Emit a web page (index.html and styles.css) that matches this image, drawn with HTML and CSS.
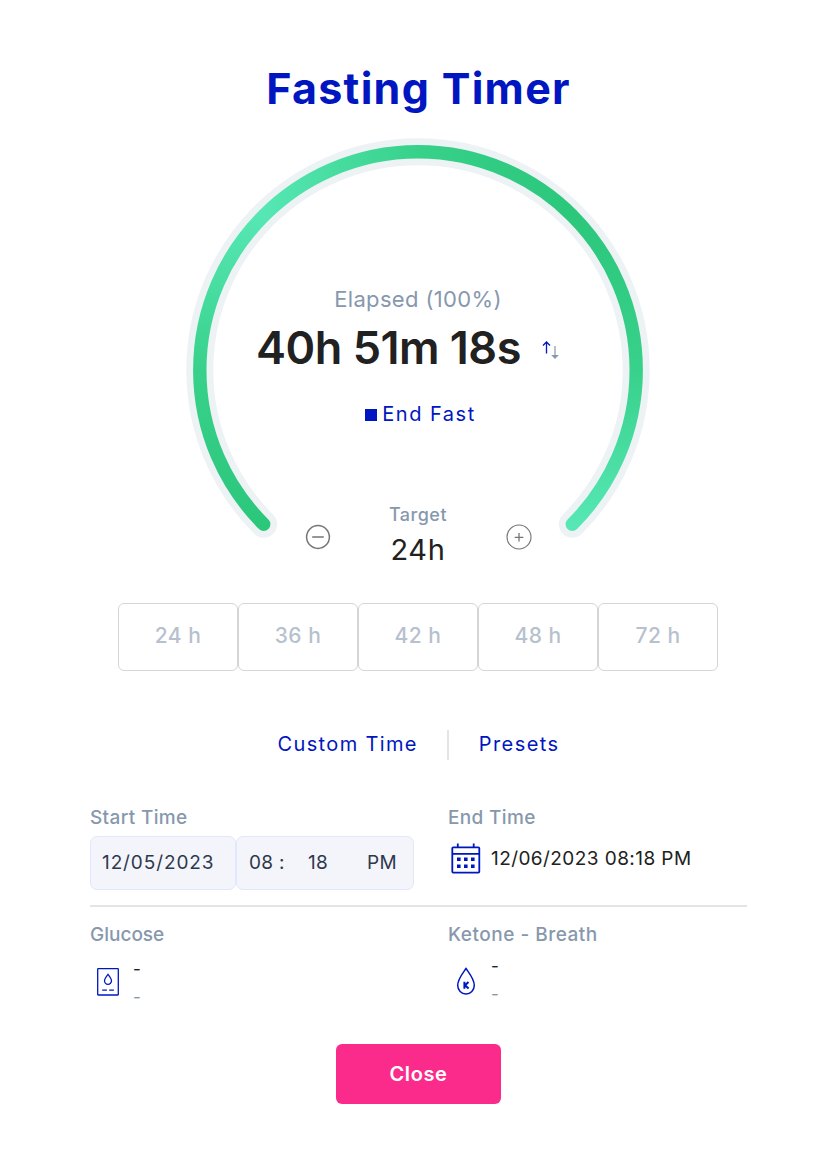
FILE: index.html
```html
<html>
<head>
    <meta charset="utf-8"/>
    <title>Fasting Timer</title>
    <link rel="stylesheet" href="styles.css">
</head>

<body>
<h1 class="title"><span>Fasting Timer</span></h1>

<div class="dial">
    <svg class="ring" viewBox="0 0 464 400">
        <defs>
            <linearGradient id="left" gradientUnits="userSpaceOnUse" x1="0" y1="386" x2="0" y2="78">
                <stop offset="0" stop-color="#2bc77b"/>
                <stop offset="0.5" stop-color="#38d18b"/>
                <stop offset="1" stop-color="#56e7b4"/>
            </linearGradient>
            <linearGradient id="over" gradientUnits="userSpaceOnUse" x1="78" y1="0" x2="386" y2="0">
                <stop offset="0" stop-color="#56e7b4"/>
                <stop offset="0.5" stop-color="#37d18a"/>
                <stop offset="1" stop-color="#2bc77b"/>
            </linearGradient>
            <linearGradient id="right" gradientUnits="userSpaceOnUse" x1="0" y1="78" x2="0" y2="386">
                <stop offset="0" stop-color="#2bc77b"/>
                <stop offset="0.5" stop-color="#38d18b"/>
                <stop offset="1" stop-color="#56e7b4"/>
            </linearGradient>
        </defs>
        <path class="track" d="M77.7 386.3A218.2 218.2 0 1 1 386.3 386.3"/>
        <path class="bar" stroke="url(#left)" d="M77.7 386.3A218.2 218.2 0 0 1 77.7 77.7"/>
        <path class="bar" stroke="url(#right)" d="M386.3 77.7A218.2 218.2 0 0 1 386.3 386.3"/>
        <path class="bar flat" stroke="url(#over)" d="M77.7 77.7A218.2 218.2 0 0 1 386.3 77.7"/>
    </svg>
    <div class="readout">
        <div class="elapsed"><span>Elapsed (100%)</span></div>
        <div class="clock">
            <span class="time">40h 51m 18s</span>
            <svg class="swap" width="18" height="20" viewBox="0 0 18 20">
                <path d="M4.5 13.5V2M1 5.5L4.5 2L8 5.5" fill="none" stroke="#0016c0" stroke-width="1.3"/>
                <path d="M13 6V15.5" stroke="#8798ad" stroke-width="1.2"/>
                <path d="M9.2 15H16.8L13 19Z" fill="#8798ad"/>
            </svg>
        </div>
        <div class="end"><i class="stop"></i><span>End Fast</span></div>
        <div class="target">
            <svg width="26" height="26" viewBox="0 0 26 26">
                <circle cx="13" cy="13" r="11.4" stroke-width="1.5"/>
                <path d="M7.2 13H18.8" stroke-width="1.5"/>
            </svg>
            <div class="goal">
                <div class="goal-label">Target</div>
                <div class="goal-value">24h</div>
            </div>
            <svg width="26" height="26" viewBox="0 0 26 26">
                <circle cx="13" cy="13" r="12" stroke-width="1.1"/>
                <path d="M8.7 13.3H17.3M13 9V17.6" stroke-width="1.3"/>
            </svg>
        </div>
    </div>
</div>

<div class="hours">
    <button>24 h</button>
    <button>36 h</button>
    <button>42 h</button>
    <button>48 h</button>
    <button>72 h</button>
</div>

<div class="links">
    <a class="custom">Custom Time</a>
    <a class="presets">Presets</a>
</div>

<div class="row times">
    <div class="col">
        <div class="label">Start Time</div>
        <div class="fields">
            <div class="field date">12/05/2023</div>
            <div class="field clock-field"><span>08 :</span><span>18</span><span>PM</span></div>
        </div>
    </div>
    <div class="col">
        <div class="label">End Time</div>
        <div class="end-time">
            <svg width="32" height="32" viewBox="0 0 32 32">
                <g fill="none" stroke="#0016c0" stroke-width="1.8">
                    <rect x="2.3" y="5.3" width="27" height="25.3" rx="1"/>
                    <path d="M2 11.8H30M7.8 1.5V5M23.7 1.5V5"/>
                </g>
                <path fill="#0016c0" d="M7 15.5h3.6v3.6H7zM14 15.5h3.6v3.6H14zM21 15.5h3.6v3.6H21zM7 22.5h3.6v3.6H7zM14 22.5h3.6v3.6H14zM21 22.5h3.6v3.6H21z"/>
            </svg>
            <span>12/06/2023 08:18 PM</span>
        </div>
    </div>
</div>

<div class="row readings">
    <div class="col">
        <div class="label">Glucose</div>
        <div class="reading glucose">
            <svg width="24" height="30" viewBox="0 0 24 30">
                <g fill="none" stroke="#0016c0" stroke-width="1.3">
                    <rect x="1.7" y="1.7" width="20.6" height="26.3" rx=".5"/>
                    <path d="M12 7.3C10.4 9.4 8.5 11.7 8.5 13.8A3.5 3.5 0 0 0 15.5 13.8C15.5 11.7 13.6 9.4 12 7.3Z"/>
                    <path d="M6.2 23.1H10.9M13.2 23.1H17.9"/>
                </g>
            </svg>
            <div class="values"><span>-</span><span class="unit">-</span></div>
        </div>
    </div>
    <div class="col">
        <div class="label wide">Ketone - Breath</div>
        <div class="reading">
            <svg width="24" height="30" viewBox="0 0 24 30">
                <g fill="none" stroke="#0016c0">
                    <path stroke-width="1.5" d="M12 1.5C9 6 3.7 12 3.7 18.3A8.3 8.8 0 0 0 20.3 18.3C20.3 12 15 6 12 1.5Z"/>
                    <path stroke-width="2" d="M10.4 14.7V21.7M14.5 14.9L11 18.2L14.6 21.6"/>
                </g>
            </svg>
            <div class="values"><span>-</span><span class="unit">-</span></div>
        </div>
    </div>
</div>

<button class="close">Close</button>
</body>
</html>
```

FILE: styles.css
```css
* {
    box-sizing: border-box;
}

body, html {
    margin: 0px;
    padding: 0px;
}

body {
    display: flex;
    flex-direction: column;
    height: 1166px;
    padding-left: 90px;
    padding-right: 76px;
    background-color: #ffffff;
    font-family: 'Inter', sans-serif;
    color: #212121;
    white-space: nowrap;
}

.title {
    height: 138px;
    margin: 0px;
    padding-top: 60px;
    font-size: 43px;
    line-height: 56px;
    font-weight: 700;
    letter-spacing: 1.3px;
    text-align: center;
    color: #0016c0;
}

.dial {
    display: grid;
    flex: 0 0 465px;
    justify-content: center;
    grid-template-columns: 464px;
    margin-right: 1px;
}

.ring, .readout {
    grid-area: 1 / 1;
}

.ring {
    width: 464px;
    height: 400px;
}

.track, .bar {
    fill: none;
    stroke-linecap: round;
}

.track {
    stroke: #edf2f5;
    stroke-width: 27px;
}

.bar {
    stroke-width: 13.4px;
}

.flat {
    stroke-linecap: butt;
}

.readout {
    display: flex;
    flex-direction: column;
    align-items: center;
    padding-top: 146px;
}

.elapsed {
    height: 36px;
    font-size: 22px;
    line-height: 30px;
    letter-spacing: 0.35px;
    color: #8798ad;
}

.clock {
    display: flex;
    align-items: center;
    gap: 21px;
    height: 56px;
    margin-right: 20px;
}

.time {
    font-size: 45px;
    line-height: 56px;
    font-weight: 600;
    letter-spacing: -0.5px;
}

.swap {
    margin-top: 3px;
}

.end {
    display: flex;
    align-items: center;
    gap: 5px;
    height: 30px;
    margin-top: 23px;
    margin-left: 5px;
    font-size: 20px;
    letter-spacing: 1.5px;
    color: #0016c0;
}

.stop {
    width: 12px;
    height: 12px;
    margin-top: 2px;
    background-color: #0016c0;
}

.target {
    display: flex;
    align-items: center;
    justify-content: space-between;
    width: 227px;
    margin-top: 74px;
}

.target svg {
    margin-bottom: 2px;
    fill: none;
    stroke: #757575;
}

.goal {
    text-align: center;
}

.goal-label {
    font-size: 18px;
    line-height: 24px;
    font-weight: 500;
    letter-spacing: 0.5px;
    color: #8798ad;
}

.goal-value {
    font-size: 29px;
    line-height: 46px;
    letter-spacing: 0.6px;
}

.hours {
    display: flex;
    justify-content: center;
    margin-right: 1px;
}

.hours button {
    width: 120px;
    height: 68px;
    border: 1px solid #d5d5d5;
    border-radius: 6px;
    padding: 0px 0px 3px 0px;
    background-color: #ffffff;
    font-family: 'Inter', sans-serif;
    font-size: 21px;
    font-weight: 500;
    letter-spacing: 0.5px;
    color: #b7c1ce;
}

.links {
    display: flex;
    justify-content: center;
    height: 30px;
    margin-top: 59px;
    font-size: 20px;
    line-height: 28px;
    letter-spacing: 1.35px;
    color: #0016c0;
}

.custom {
    padding-right: 29px;
    border-right: 2px solid #e4e4e4;
}

.presets {
    padding-left: 30px;
    letter-spacing: 1.4px;
}

.row {
    display: grid;
    grid-template-columns: 358px 1fr;
}

.times {
    height: 103px;
    margin-top: 44px;
    border-bottom: 2px solid #e4e4e4;
}

.label {
    height: 32px;
    font-size: 19px;
    line-height: 28px;
    font-weight: 500;
    letter-spacing: 0.35px;
    color: #8798ad;
}

.readings .label {
    letter-spacing: 0px;
}

.readings .wide {
    letter-spacing: 0.5px;
}

.fields {
    display: flex;
}

.field {
    height: 54px;
    border: 1px solid #e0e7ff;
    border-radius: 7px;
    background-color: #f4f5fb;
    font-size: 19px;
    line-height: 51px;
    color: #2e384d;
}

.date {
    width: 146px;
    padding-left: 11px;
    letter-spacing: 0.9px;
}

.clock-field {
    display: grid;
    grid-template-columns: 59px 59px 1fr;
    width: 178px;
    padding-left: 12px;
    letter-spacing: 0.3px;
}

.end-time {
    display: flex;
    align-items: center;
    gap: 9px;
    height: 44px;
    padding-left: 2px;
    font-size: 19px;
    letter-spacing: 0.43px;
}

.readings {
    margin-top: 14px;
    height: 123px;
}

.reading {
    display: flex;
    gap: 13px;
    padding-left: 6px;
    padding-top: 14px;
}

.values {
    display: flex;
    flex-direction: column;
    margin-top: -15px;
    font-size: 17px;
    line-height: 28px;
}

.glucose .values {
    margin-top: -12px;
}

.unit {
    color: #8798ad;
}

.close {
    width: 165px;
    height: 60px;
    align-self: center;
    border: none;
    border-radius: 6px;
    background-color: #fb2b8c;
    font-family: 'Inter', sans-serif;
    font-size: 20px;
    font-weight: 600;
    letter-spacing: 0.6px;
    color: #ffffff;
}
```
